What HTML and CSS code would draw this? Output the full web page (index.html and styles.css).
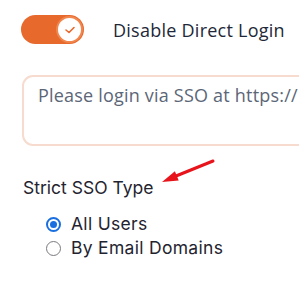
FILE: index.html
```html
<!DOCTYPE html>
<html>
<head>
<meta charset="utf-8">
<link rel="stylesheet" href="styles.css">
</head>
<body>
<div class="page">
  <div class="toggle-row">
    <div class="toggle">
      <span class="knob">
        <svg width="12" height="10" viewBox="0 0 12 10"><path d="M2 5 L5 7.5 L10 2.5" fill="none" stroke="#e8692c" stroke-width="1.6" stroke-linecap="round" stroke-linejoin="round"/></svg>
      </span>
    </div>
    <span class="toggle-label">Disable Direct Login</span>
  </div>
  <div class="message">Please login via SSO at https://</div>
  <div class="sso">
    <div class="sso-title">Strict SSO Type</div>
    <svg class="arrow" width="60" height="32" viewBox="0 0 60 32">
      <path d="M54 4 L17 19" stroke="#e8141b" stroke-width="3" stroke-linecap="round"/>
      <path d="M3 25 L15.9 14.3 L19.7 23.5 Z" fill="#e8141b"/>
    </svg>
    <div class="options">
      <label class="option"><span class="radio checked"></span>All Users</label>
      <label class="option"><span class="radio"></span>By Email Domains</label>
    </div>
  </div>
</div>
</body>
</html>
```
FILE: styles.css
```css
html, body {
  margin: 0;
  padding: 0;
  background: #ffffff;
  overflow: hidden;
}
.page {
  width: 299px;
  height: 287px;
  overflow: hidden;
  font-family: "Open Sans", "Noto Sans", sans-serif;
  color: #1e2838;
}
.toggle-row {
  display: flex;
  align-items: center;
  margin: 15px 0 0 21px;
  gap: 29px;
}
.toggle {
  width: 63px;
  height: 29px;
  border-radius: 15px;
  background: #e8692c;
  display: flex;
  align-items: center;
  justify-content: flex-end;
  padding-right: 1px;
  box-sizing: border-box;
}
.knob {
  width: 27px;
  height: 27px;
  border-radius: 50%;
  background: #fff;
  box-sizing: border-box;
  border: 2px solid #f0874f;
  display: flex;
  align-items: center;
  justify-content: center;
}
.toggle-label {
  font-size: 18px;
  line-height: 24px;
  letter-spacing: 0.25px;
}
.message {
  margin: 31px 0 0 22px;
  width: 360px;
  height: 71px;
  box-sizing: border-box;
  border: 2px solid #f7dbcf;
  border-radius: 11px;
  padding: 5px 14px;
  font-size: 18px;
  line-height: 26px;
  letter-spacing: 0.2px;
  color: #5b6677;
  white-space: nowrap;
}
.sso {
  position: relative;
  margin: 32px 0 0 23px;
}
.sso-title {
  font-family: Inter, "Noto Sans", sans-serif;
  font-size: 17.5px;
  line-height: 20px;
  color: #1f2430;
}
.arrow {
  position: absolute;
  left: 136px;
  top: -21px;
}
.options {
  display: flex;
  flex-direction: column;
  margin: 16px 0 0 23px;
  gap: 4px;
}
.option {
  display: flex;
  align-items: center;
  gap: 10px;
  font-family: Inter, "Noto Sans", sans-serif;
  font-size: 17.5px;
  line-height: 20px;
  letter-spacing: 0.3px;
  color: #1f2430;
}
.radio {
  width: 15px;
  height: 15px;
  box-sizing: border-box;
  border: 1.5px solid #7a7a80;
  border-radius: 50%;
  position: relative;
}
.radio.checked {
  border: 2px solid #1a6fe0;
}
.radio.checked::after {
  content: "";
  position: absolute;
  left: 2px;
  top: 2px;
  width: 7px;
  height: 7px;
  border-radius: 50%;
  background: #1a6fe0;
}
```
